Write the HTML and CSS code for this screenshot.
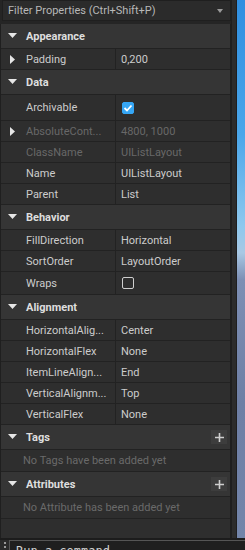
FILE: index.html
```html
<!DOCTYPE html>
<html>
<head>
<meta charset="utf-8">
<link rel="stylesheet" href="styles.css">
</head>
<body>
<div class="app">
  <div class="left">
    <div class="filter">
      <span>Filter Properties (Ctrl+Shift+P)</span>
      <svg class="drop" width="6" height="4" viewBox="0 0 6 4"><polygon points="0,0 6,0 3,4" fill="#9a9a9a"/></svg>
    </div>
    <div class="panel">
      <div class="sec"><svg class="caret" width="9" height="6" viewBox="0 0 9 6"><polygon points="0,0 9,0 4.5,5" fill="#e6e6e6"/></svg><span>Appearance</span></div>
      <div class="row"><div class="name"><svg class="arrow" width="5" height="9" viewBox="0 0 5 9"><polygon points="0,0 5,4.5 0,9" fill="#e6e6e6"/></svg>Padding</div><div class="val">0,200</div></div>

      <div class="sec"><svg class="caret" width="9" height="6" viewBox="0 0 9 6"><polygon points="0,0 9,0 4.5,5" fill="#e6e6e6"/></svg><span>Data</span></div>
      <div class="row check-row"><div class="name">Archivable</div><div class="val"><span class="check on"><svg width="10" height="8" viewBox="0 0 10 8"><polyline points="1.5,4 4,6.5 8.5,1.5" fill="none" stroke="#fff" stroke-width="1.8"/></svg></span></div></div>
      <div class="row off"><div class="name"><svg class="arrow" width="5" height="9" viewBox="0 0 5 9"><polygon points="0,0 5,4.5 0,9" fill="#e6e6e6"/></svg>AbsoluteCont...</div><div class="val">4800, 1000</div></div>
      <div class="row off"><div class="name">ClassName</div><div class="val">UIListLayout</div></div>
      <div class="row"><div class="name">Name</div><div class="val">UIListLayout</div></div>
      <div class="row"><div class="name">Parent</div><div class="val">List</div></div>

      <div class="sec"><svg class="caret" width="9" height="6" viewBox="0 0 9 6"><polygon points="0,0 9,0 4.5,5" fill="#e6e6e6"/></svg><span>Behavior</span></div>
      <div class="row"><div class="name">FillDirection</div><div class="val">Horizontal</div></div>
      <div class="row"><div class="name">SortOrder</div><div class="val">LayoutOrder</div></div>
      <div class="row check-row-sm"><div class="name">Wraps</div><div class="val"><span class="check"></span></div></div>

      <div class="sec"><svg class="caret" width="9" height="6" viewBox="0 0 9 6"><polygon points="0,0 9,0 4.5,5" fill="#e6e6e6"/></svg><span>Alignment</span></div>
      <div class="row"><div class="name">HorizontalAlig...</div><div class="val">Center</div></div>
      <div class="row"><div class="name">HorizontalFlex</div><div class="val">None</div></div>
      <div class="row"><div class="name">ItemLineAlign...</div><div class="val">End</div></div>
      <div class="row"><div class="name">VerticalAlignm...</div><div class="val">Top</div></div>
      <div class="row"><div class="name">VerticalFlex</div><div class="val">None</div></div>

      <div class="sec"><svg class="caret" width="9" height="6" viewBox="0 0 9 6"><polygon points="0,0 9,0 4.5,5" fill="#e6e6e6"/></svg><span>Tags</span><span class="add"><svg width="9" height="9" viewBox="0 0 9 9"><path d="M4.5 0v9M0 4.5h9" stroke="#cfcfcf" stroke-width="1.6"/></svg></span></div>
      <div class="empty">No Tags have been added yet</div>

      <div class="sec"><svg class="caret" width="9" height="6" viewBox="0 0 9 6"><polygon points="0,0 9,0 4.5,5" fill="#e6e6e6"/></svg><span>Attributes</span><span class="add"><svg width="9" height="9" viewBox="0 0 9 9"><path d="M4.5 0v9M0 4.5h9" stroke="#cfcfcf" stroke-width="1.6"/></svg></span></div>
      <div class="empty">No Attribute has been added yet</div>
    </div>
  </div>
  <div class="gutter"></div>
  <div class="viewport"></div>
  <div class="sep"></div>
  <div class="command">
    <div class="handle"><i></i><i></i></div>
    <div class="input">Run a command</div>
  </div>
</div>
</body>
</html>
```
FILE: styles.css
```css
* { box-sizing: border-box; margin: 0; padding: 0; }
body {
  width: 245px;
  height: 550px;
  overflow: hidden;
  background: #252525;
  font-family: Roboto, "Liberation Sans", sans-serif;
  font-size: 11px;
  color: #cccccc;
}
.app {
  display: grid;
  grid-template-columns: 231px 6px 8px;
  grid-template-rows: 538px 2px 10px;
  height: 550px;
}
.left {
  display: flex;
  flex-direction: column;
  gap: 3px;
  overflow: hidden;
}
.filter {
  height: 21px;
  margin-left: 2px;
  background: #2b2b2b;
  border: 1px solid #1f1f1f;
  display: flex;
  align-items: center;
  justify-content: space-between;
  padding: 0 7px 0 5px;
  color: #b8b8b8;
  flex: none;
}
.panel {
  flex: 1;
  background: #2e2e2e;
  border-left: 1px solid #1f1f1f;
  border-right: 1px solid #1f1f1f;
}
.sec {
  height: 25px;
  background: #353535;
  border-bottom: 1px solid #222222;
  display: flex;
  align-items: center;
  padding-left: 7px;
  font-weight: bold;
  color: #dedede;
}
.sec .caret { margin-right: 9px; }
.sec .add {
  margin-left: auto;
  margin-right: 3px;
  width: 16px;
  height: 14px;
  background: #3d3d3d;
  display: flex;
  align-items: center;
  justify-content: center;
}
.row {
  height: 21px;
  display: grid;
  grid-template-columns: 114px 1fr;
  border-bottom: 1px solid #222222;
}
.row.check-row { height: 26px; }
.row.check-row-sm { height: 23px; }
.name {
  display: flex;
  align-items: center;
  padding-left: 25px;
  position: relative;
  white-space: nowrap;
  overflow: hidden;
}
.name .arrow {
  position: absolute;
  left: 9px;
  top: 50%;
  margin-top: -4px;
}
.val {
  display: flex;
  align-items: center;
  padding-left: 5px;
  border-left: 1px solid #222222;
  white-space: nowrap;
  overflow: hidden;
}
.row.off .name, .row.off .val { color: #686868; }
.check {
  width: 12px;
  height: 12px;
  border: 1px solid #cfcfcf;
  border-radius: 2px;
  display: flex;
  align-items: center;
  justify-content: center;
  margin-left: 1px;
}
.check.on {
  background: #35a6f5;
  border-color: #35a6f5;
}
.empty {
  height: 22px;
  display: flex;
  align-items: center;
  padding-left: 22px;
  color: #6a6a6a;
  border-bottom: 1px solid #222222;
}
.gutter {
  background: #2c2c2c;
  border-left: 1px solid #1f1f1f;
  border-right: 1px solid #1f1f1f;
}
.viewport {
  background: linear-gradient(180deg, #2f8ee0 0%, #4aa6ea 25%, #8ec8ee 42%, #a8c8e4 47%, #7d8fb4 52%, #6e7fa5 75%, #7385aa 100%);
}
.sep {
  grid-column: 1 / 4;
  background: #1c1c1c;
}
.command {
  grid-column: 1 / 4;
  display: flex;
  background: #2b2b2b;
  overflow: hidden;
}
.handle {
  width: 9px;
  display: flex;
  flex-direction: column;
  align-items: center;
  gap: 2px;
  padding-top: 2px;
}
.handle i {
  width: 2px;
  height: 2px;
  background: #9a9a9a;
}
.input {
  flex: 1;
  background: #1f1f1f;
  border-top: 1px solid #555555;
  border-left: 1px solid #555555;
  padding: 4px 0 0 6px;
  font-family: "DejaVu Sans Mono", "Liberation Mono", monospace;
  font-size: 12px;
  line-height: 12px;
  color: #d0d0d0;
  white-space: nowrap;
}
```
